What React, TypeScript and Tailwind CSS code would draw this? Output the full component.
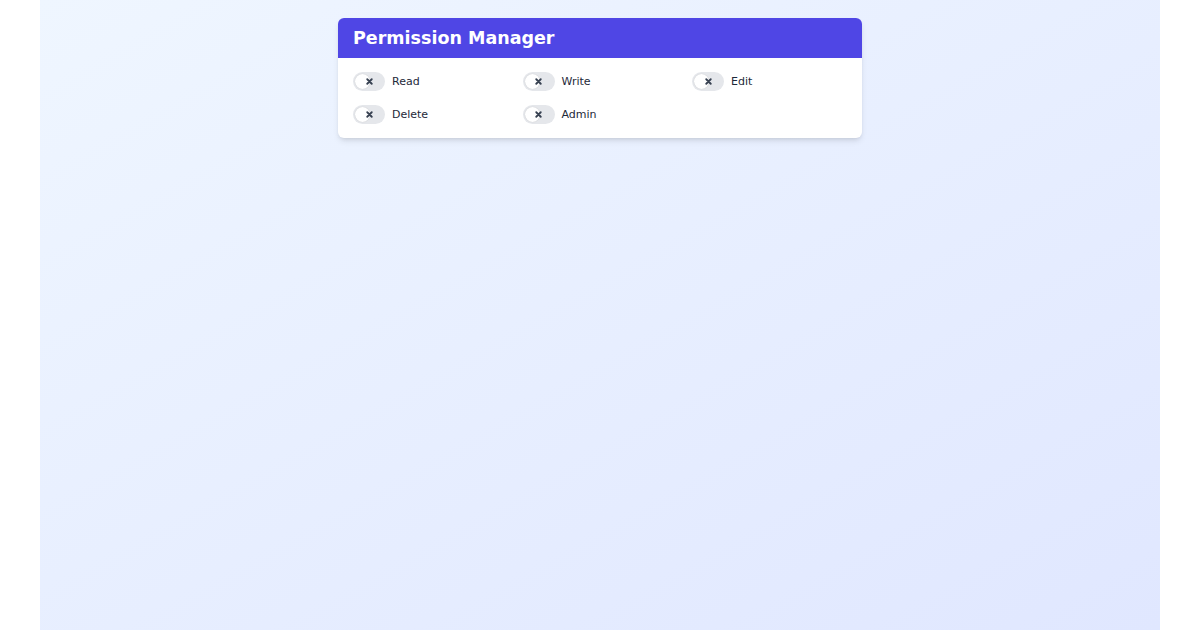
import React from "react";

const perms = ["Read", "Write", "Edit", "Delete", "Admin"];

function Toggle() {
  return (
    <span className="relative inline-block h-[19px] w-8 shrink-0 rounded-full bg-[#e5e7eb]">
      <span className="absolute left-0.5 top-0.5 h-[15px] w-[15px] rounded-full bg-white shadow-[0_0_1px_rgba(0,0,0,0.2)]" />
      <svg
        viewBox="0 0 10 10"
        className="absolute left-[12.5px] top-[6px] h-[7px] w-[7px] text-[#374151]"
        fill="none"
        stroke="currentColor"
        strokeWidth="2.6"
        strokeLinecap="round"
      >
        <path d="M1.8 1.8l6.4 6.4M8.2 1.8l-6.4 6.4" />
      </svg>
    </span>
  );
}

export default function App() {
  return (
    <div className="min-h-screen bg-white" style={{ fontFamily: '"DejaVu Sans", sans-serif' }}>
      <div className="mx-auto h-[630px] w-[1120px] bg-linear-to-br from-[#eff6ff] to-[#e0e7ff] pt-[18px]">
        {/* Card */}
        <div className="mx-auto w-[524px] overflow-hidden rounded-md bg-white shadow-md">
          <div className="bg-[#4f46e5] px-[15px] py-2">
            <h1 className="text-[17.5px] font-bold leading-6 text-white">Permission Manager</h1>
          </div>
          <div className="grid grid-cols-3 gap-x-[14.5px] gap-y-3.5 px-[15px] py-3.5">
            {perms.map((p) => (
              <label key={p} className="flex items-center gap-[7px]">
                <Toggle />
                <span className="pt-[2px] text-[11px] text-gray-800">{p}</span>
              </label>
            ))}
          </div>
        </div>
      </div>
    </div>
  );
}
